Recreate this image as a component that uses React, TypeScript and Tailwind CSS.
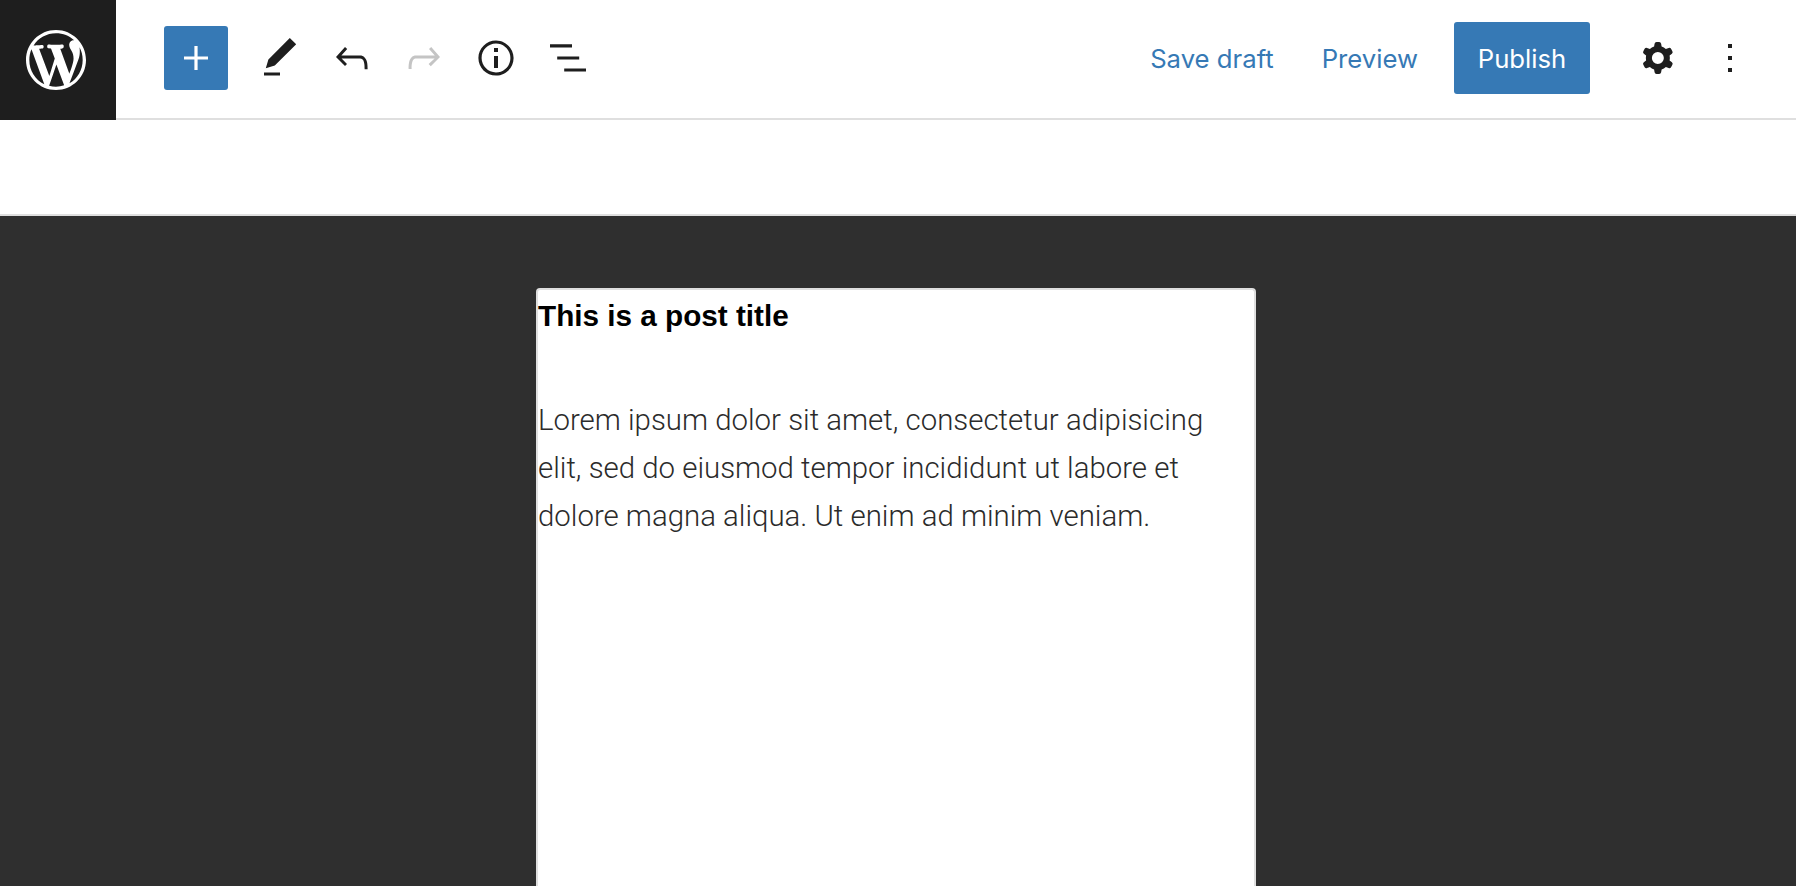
import React from 'react';

const iconBtn = 'w-12 h-12 shrink-0';

const Icon: React.FC<{ d: string; className?: string }> = ({ d, className }) => (
    <svg viewBox="0 0 24 24" className={className ?? iconBtn} fill="currentColor" fillRule="evenodd">
        <path d={d} />
    </svg>
);

const WpLogo: React.FC = () => (
    <svg viewBox="0 0 20 20" className="w-[60px] h-[60px]" fill="currentColor">
        <path d="M20 10c0-5.51-4.49-10-10-10C4.48 0 0 4.49 0 10c0 5.52 4.48 10 10 10 5.51 0 10-4.48 10-10zM7.78 15.37L4.37 6.22c.55-.02 1.17-.08 1.17-.08.5-.06.44-1.13-.06-1.11 0 0-1.45.11-2.37.11-.18 0-.37 0-.58-.01C4.12 2.69 6.87 1.11 10 1.11c2.33 0 4.45.87 6.05 2.34-.68-.11-1.65.39-1.65 1.58 0 .74.45 1.36.9 2.1.35.61.55 1.36.55 2.46 0 1.49-1.4 5-1.4 5l-3.03-8.37c.54-.02.82-.17.82-.17.5-.05.44-1.25-.06-1.22 0 0-1.44.12-2.38.12-.87 0-2.33-.12-2.33-.12-.5-.03-.56 1.2-.06 1.22l.92.08 1.26 3.41zM17.41 10c.24-.64.74-1.87.43-4.25.7 1.29 1.05 2.71 1.05 4.25 0 3.29-1.73 6.24-4.4 7.78.97-2.59 1.94-5.2 2.92-7.78zM6.1 18.09C3.12 16.65 1.11 13.53 1.11 10c0-1.3.23-2.48.72-3.59C3.25 10.3 4.67 14.2 6.1 18.09zm4.03-6.63l2.58 6.98c-.86.29-1.76.45-2.71.45-.79 0-1.57-.11-2.29-.33.81-2.38 1.62-4.74 2.42-7.1z" />
    </svg>
);

const App: React.FC = () => {
    return (
        <div className="h-[886px] overflow-hidden flex flex-col bg-[#2f2f2f] font-['Inter',sans-serif]">
            <div className="h-[120px] bg-white flex border-b-2 border-[#dfdfdf] shrink-0">
                <div className="w-[116px] h-[120px] bg-[#1e1e1e] text-white flex items-center pl-[26px] shrink-0">
                    <WpLogo />
                </div>
                <div className="flex-1 flex items-center pl-12 pr-[42px] pb-[2px]">
                    <button className="w-16 h-16 bg-[#3679b5] rounded-[3px] text-white flex items-center justify-center mr-7">
                        <Icon d="M18 11.2h-5.2V6h-1.6v5.2H6v1.6h5.2V18h1.6v-5.2H18z" />
                    </button>
                    <div className="flex items-center gap-6 text-[#1e1e1e]">
                        <Icon d="M20.1 5.1L16.9 2 6.2 12.7l-1.3 4.4 4.5-1.3L20.1 5.1zM4 20.8h8v-1.5H4v1.5z" />
                        <Icon d="M18.3 11.7c-.6-.6-1.4-.9-2.3-.9H6.7l2.9-3.3-1.1-1-4.5 5L8.5 16l1-1-2.7-2.7H16c.5 0 .9.2 1.3.5 1 1 1 3.4 1 4.5v.3h1.5v-.2c0-1.5 0-4.3-1.5-5.7z" />
                        <Icon
                            className="w-12 h-12 shrink-0 text-[#c4c4c4]"
                            d="M15.6 6.5l-1.1 1 2.9 3.3H8c-.9 0-1.7.3-2.3.9-1.4 1.5-1.4 4.2-1.4 5.6v.2h1.5v-.3c0-1.1 0-3.5 1-4.5.3-.3.7-.5 1.3-.5h9.2L14.3 15l1.1 1.1 4.6-4.6-4.4-5z"
                        />
                        <Icon d="M12 3.2c-4.8 0-8.8 3.9-8.8 8.8 0 4.8 3.9 8.8 8.8 8.8 4.8 0 8.8-3.9 8.8-8.8 0-4.8-4-8.8-8.8-8.8zm0 16c-4 0-7.2-3.3-7.2-7.2C4.8 8 8 4.8 12 4.8s7.2 3.3 7.2 7.2c0 4-3.2 7.2-7.2 7.2zM11 17h2v-6h-2v6zm0-8h2V7h-2v2z" />
                        <Icon d="M3 5.1h11v1.6H3V5.1zm3.6 6.1h11v1.6h-11v-1.6zM21 17.2H10.1v1.6H21v-1.6z" />
                    </div>
                    <div className="ml-auto flex items-center text-[25.7px] text-[#3679b5]">
                        <span className="mr-12 pt-[2px]">Save draft</span>
                        <span className="mr-9 pt-[2px]">Preview</span>
                        <button className="w-[136px] h-[72px] pt-[2px] bg-[#3679b5] rounded-[3px] text-white">Publish</button>
                        <Icon
                            className="w-12 h-12 shrink-0 ml-11 text-[#1e1e1e]"
                            d="M10.289 4.836A1 1 0 0 1 11.275 4h1.306a1 1 0 0 1 .987.836l.244 1.466c.787.26 1.503.679 2.108 1.218l1.393-.522a1 1 0 0 1 1.216.437l.653 1.13a1 1 0 0 1-.23 1.273l-1.148.944a6.025 6.025 0 0 1 0 2.435l1.149.946a1 1 0 0 1 .23 1.272l-.653 1.13a1 1 0 0 1-1.216.437l-1.394-.522c-.605.54-1.32.958-2.108 1.218l-.244 1.466a1 1 0 0 1-.987.836h-1.306a1 1 0 0 1-.986-.836l-.244-1.466a5.995 5.995 0 0 1-2.108-1.218l-1.394.522a1 1 0 0 1-1.217-.436l-.653-1.131a1 1 0 0 1 .23-1.272l1.149-.946a6.026 6.026 0 0 1 0-2.435l-1.148-.944a1 1 0 0 1-.23-1.272l.653-1.131a1 1 0 0 1 1.217-.437l1.393.522a5.994 5.994 0 0 1 2.108-1.218l.244-1.466ZM14.929 12a3 3 0 1 1-6 0 3 3 0 0 1 6 0Z"
                        />
                        <Icon
                            className="w-12 h-12 shrink-0 ml-6 text-[#1e1e1e]"
                            d="M13 19h-2v-2h2v2zm0-6h-2v-2h2v2zm0-6h-2V5h2v2z"
                        />
                    </div>
                </div>
            </div>
            <div className="h-[96px] bg-white border-b-2 border-[#dfdfdf] shrink-0" />
            <div className="flex-1 flex justify-center pt-[72px] min-h-0">
                <div className="w-[720px] mr-[4px] bg-white border-2 border-b-0 border-[#dfdfdf] rounded-t-[4px]">
                    <h1 className="text-[29.7px] leading-[52px] font-bold text-black font-['Liberation_Sans',sans-serif]">
                        This is a post title
                    </h1>
                    <p className="mt-[54px] pr-8 text-[29.4px] leading-[48px] font-light text-[#2b2b2b] font-['Roboto',sans-serif]">
                        Lorem ipsum dolor sit amet, consectetur adipisicing elit, sed do eiusmod tempor incididunt ut
                        labore et dolore magna aliqua. Ut enim ad minim veniam.
                    </p>
                </div>
            </div>
        </div>
    );
};

export default App;
